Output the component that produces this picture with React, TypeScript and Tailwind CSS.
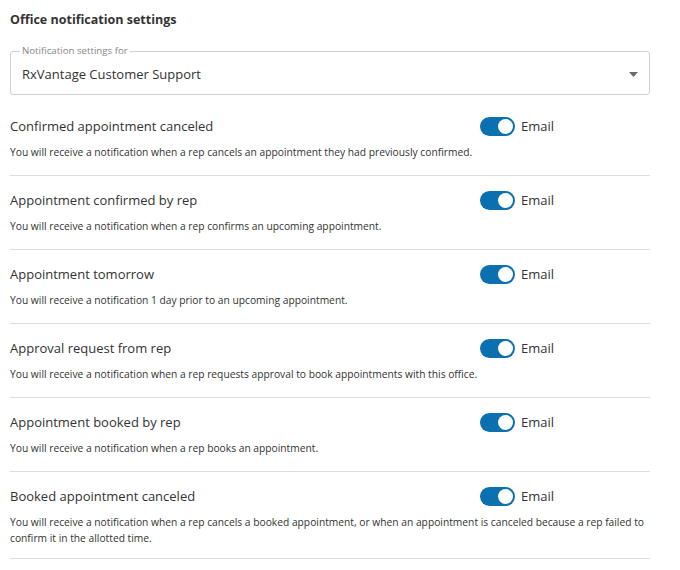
import React, { useState } from 'react';

interface NotificationSetting {
  id: string;
  title: string;
  description: string;
}

const settings: NotificationSetting[] = [
  {
    id: 'confirmed-canceled',
    title: 'Confirmed appointment canceled',
    description: 'You will receive a notification when a rep cancels an appointment they had previously confirmed.',
  },
  {
    id: 'confirmed-by-rep',
    title: 'Appointment confirmed by rep',
    description: 'You will receive a notification when a rep confirms an upcoming appointment.',
  },
  {
    id: 'tomorrow',
    title: 'Appointment tomorrow',
    description: 'You will receive a notification 1 day prior to an upcoming appointment.',
  },
  {
    id: 'approval-request',
    title: 'Approval request from rep',
    description: 'You will receive a notification when a rep requests approval to book appointments with this office.',
  },
  {
    id: 'booked-by-rep',
    title: 'Appointment booked by rep',
    description: 'You will receive a notification when a rep books an appointment.',
  },
  {
    id: 'booked-canceled',
    title: 'Booked appointment canceled',
    description:
      'You will receive a notification when a rep cancels a booked appointment, or when an appointment is canceled because a rep failed to confirm it in the allotted time.',
  },
];

function Toggle({ checked, onChange }: { checked: boolean; onChange: () => void }) {
  return (
    <button
      type="button"
      onClick={onChange}
      className={`flex h-[19px] w-[35px] items-center rounded-full p-[2px] ${
        checked ? 'justify-end bg-[#0a70b0]' : 'justify-start bg-[#b8b8b8]'
      }`}
    >
      <span className="h-[15px] w-[15px] rounded-full bg-white" />
    </button>
  );
}

export default function App() {
  const [enabled, setEnabled] = useState<Record<string, boolean>>(
    Object.fromEntries(settings.map((s) => [s.id, true]))
  );

  return (
    <div className="min-h-[570px] bg-white font-['Open_Sans',sans-serif] text-[#333]">
      <div className="ml-[10px] w-[640px] pt-[10px]">
        <h1 className="mb-[15px] text-[12.5px] font-bold leading-[20px] text-[#333]">Office notification settings</h1>

        <fieldset className="rounded-[3px] border border-[#d0d0d0] px-[9px] pb-[10px]">
          <legend className="px-[2px] text-[9.7px] leading-[12px] text-[#888]">Notification settings for</legend>
          <div className="flex items-center justify-between pl-[2px] pt-[7px]">
            <span className="text-[13px] leading-[20px]">RxVantage Customer Support</span>
            <svg width="9" height="5" viewBox="0 0 9 5" className="mr-[2px]">
              <path d="M0 0h9L4.5 5z" fill="#6b6b6b" />
            </svg>
          </div>
        </fieldset>

        <div className="mt-[21px]">
          {settings.map((s, i) => (
            <div
              key={s.id}
              className={`border-b border-[#dedede] ${i === 0 ? '' : 'pt-[14px]'} ${
                i === settings.length - 1 ? 'pb-[12px]' : 'pb-[15px]'
              }`}
            >
              <div className="flex items-center">
                <p className="w-[470px] text-[13px] leading-[20px]">{s.title}</p>
                <div className="flex items-center gap-[6px]">
                  <Toggle
                    checked={enabled[s.id]}
                    onChange={() => setEnabled((prev) => ({ ...prev, [s.id]: !prev[s.id] }))}
                  />
                  <span className="text-[13px] leading-[20px]">Email</span>
                </div>
              </div>
              <p className="mt-[8px] text-[10.25px] leading-[16px] text-[#333]">{s.description}</p>
            </div>
          ))}
        </div>
      </div>
    </div>
  );
}
